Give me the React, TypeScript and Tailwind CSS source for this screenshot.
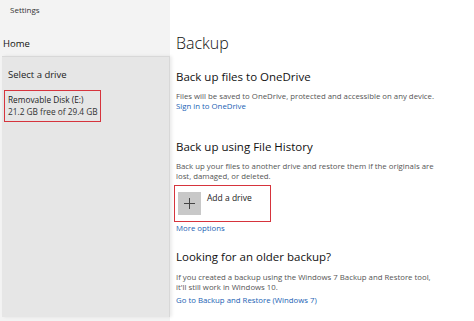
export default function App() {
  return (
    <div className="flex h-[321px] w-[474px] overflow-hidden bg-white font-['Open_Sans',sans-serif] text-[#1a1a1a]">
      {/* Sidebar */}
      <div className="flex w-[170px] flex-col bg-[#f3f3f3]">
        <div className="h-[56px] shrink-0">
          <p className="pl-[10px] pt-[4px] text-[8px] text-[#333]">Settings</p>
          <p className="pl-[3px] pt-[21px] text-[9.5px] text-[#111]">Home</p>
        </div>
        <div className="ml-[2px] mb-[4px] flex-1 border-r border-t border-[#d8d8d8] bg-[#e6e6e6] shadow-[2px_0_3px_rgba(0,0,0,0.08)]">
          <p className="pl-[6px] pt-[11px] text-[9.5px] text-[#222]">Select a drive</p>
          <div className="ml-[2px] mt-[8px] w-[97px] whitespace-nowrap border-[1.5px] border-[#d6343d] px-[3px] py-[3px] leading-[12px]">
            <p className="text-[8.3px] text-[#222]">Removable Disk (E:)</p>
            <p className="text-[8.3px] text-[#333]">21.2 GB free of 29.4 GB</p>
          </div>
        </div>
      </div>

      {/* Content */}
      <div className="flex-1 pl-[6px]">
        <h1 className="pt-[31px] text-[16px] font-light leading-[24px] text-[#111]">Backup</h1>

        <h2 className="mt-[14px] text-[11.5px] leading-[16px] text-[#111]">Back up files to OneDrive</h2>
        <p className="mt-[6px] text-[7.8px] leading-[10px] text-[#555]">
          Files will be saved to OneDrive, protected and accessible on any device.
        </p>
        <p className="text-[7.8px] leading-[10px] text-[#1a5fb4]">Sign in to OneDrive</p>

        <h2 className="mt-[28px] text-[11.5px] leading-[16px] text-[#111]">Back up using File History</h2>
        <p className="mt-[6px] w-[270px] text-[7.8px] leading-[10px] text-[#555]">
          Back up your files to another drive and restore them if the originals are lost, damaged, or deleted.
        </p>
        <div className="-ml-[2px] mt-[4px] flex h-[37px] w-[97px] items-start gap-[6px] border-[1.5px] border-[#d6343d] pl-[3px] pt-[6px]">
          <div className="flex h-[23px] w-[23px] items-center justify-center bg-[#c8c8c8]">
            <svg width="11" height="11" viewBox="0 0 11 11">
              <path d="M5.5 0v11M0 5.5h11" stroke="#444" strokeWidth="1" />
            </svg>
          </div>
          <p className="text-[8.5px] leading-[12px] text-[#222]">Add a drive</p>
        </div>
        <p className="mt-[1px] text-[7.8px] leading-[10px] text-[#1a5fb4]">More options</p>

        <h2 className="mt-[16px] text-[11.5px] leading-[16px] text-[#111]">Looking for an older backup?</h2>
        <p className="mt-[7px] w-[262px] text-[7.8px] leading-[10px] text-[#555]">
          If you created a backup using the Windows 7 Backup and Restore tool, it&apos;ll still work in Windows 10.
        </p>
        <p className="mt-[3px] text-[7.8px] leading-[10px] text-[#1a5fb4]">Go to Backup and Restore (Windows 7)</p>
      </div>
    </div>
  )
}
